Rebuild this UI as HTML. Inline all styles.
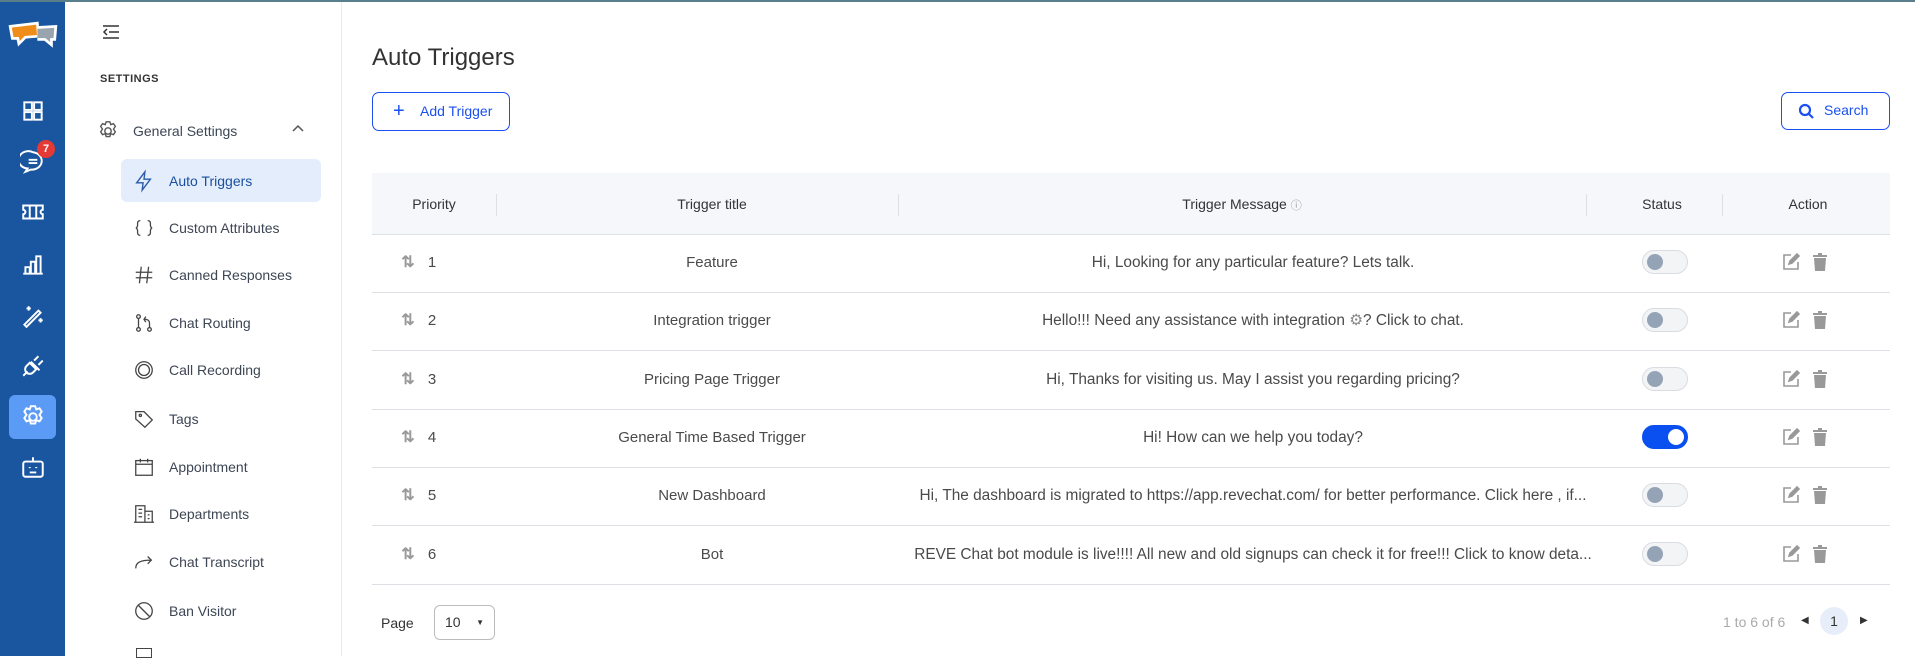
<!DOCTYPE html>
<html><head><meta charset="utf-8"><style>
*{box-sizing:border-box;margin:0;padding:0}
body{width:1915px;height:654px;overflow:hidden;background:#fff;font-family:"Liberation Sans",sans-serif;position:relative;border-top:2px solid #5a7f8c}
.abs{position:absolute}
#rail{left:0;top:0;width:65px;height:654px;background:#1a56a0}
#side{left:65px;top:0;width:277px;height:654px;background:#fff;border-right:1px solid #e8eaee}
.ri{position:absolute;left:20px;width:26px;height:26px}
.it{position:absolute;left:121px;width:200px;height:43px;display:flex;align-items:center;font-size:14px;color:#3d4654}
.it svg{position:absolute;left:12px;width:22px;height:22px;overflow:visible}
.it span{position:absolute;left:48px}
.hd{position:absolute;top:171px;left:372px;width:1518px;height:62px;background:#f5f7fb;border-bottom:1px solid #dde0e5}
.hc{position:absolute;top:0;height:62px;line-height:62px;font-size:14px;color:#333;transform:translateX(-50%);white-space:nowrap}
.sep{position:absolute;top:21px;width:1px;height:22px;background:#dcdfe4}
.row{position:absolute;left:372px;width:1518px;height:58px;border-bottom:1px solid #dcdfe4}
.c{position:absolute;top:0;line-height:56px;font-size:15px;color:#4a4a4a;transform:translateX(-50%);white-space:nowrap}
.m{font-size:15.4px}
.tg{position:absolute;left:1642px;top:15px;width:46px;height:24px;border-radius:12px;background:#f3f4f6;border:1px solid #d9dce1}
.tg i{position:absolute;left:4px;top:3px;width:16px;height:16px;border-radius:50%;background:#95a3b6}
.tg.on{background:#0a4ff0;border-color:#0a4ff0}
.tg.on i{left:25px;background:#fff}
.ac{position:absolute;left:1782px;top:18px}
</style></head><body>
<div id="rail" class="abs">
 <svg class="abs" style="left:8px;top:18px" width="50" height="28" viewBox="0 0 46 24"><path d="M2 5 L27 2 L28 14 L16 15 L10 21 L9 16 L4 16Z" fill="#f08c1a" stroke="#fff" stroke-width="2.5"/><path d="M27 6 L44 5 L43 17 L40 17 L40 22 L34 17 L27 17" fill="#9aa4ae" stroke="#fff" stroke-width="2.5"/></svg>
 <svg class="ri" style="top:96px" viewBox="0 0 24 24" fill="none" stroke="#fff" stroke-width="1.8"><rect x="4" y="4" width="7" height="7"/><rect x="13" y="4" width="7" height="7"/><rect x="4" y="13" width="7" height="7"/><rect x="13" y="13" width="7" height="7"/></svg>
 <svg class="ri" style="top:147px" viewBox="0 0 24 24" fill="none" stroke="#fff" stroke-width="1.8"><path d="M12 3a9 8 0 1 0-5 15l-2 3 5-2a9 8 0 0 0 2-16z"/><path d="M8 10h8M8 13h8"/></svg>
 <div class="abs" style="left:37px;top:138px;width:18px;height:18px;border-radius:50%;background:#e53935;color:#fff;font-size:11px;font-weight:bold;text-align:center;line-height:18px">7</div>
 <svg class="ri" style="top:197px" viewBox="0 0 24 24" fill="none" stroke="#fff" stroke-width="1.8"><path d="M3 6h18v4a2 2 0 0 0 0 4v4H3v-4a2 2 0 0 0 0-4z"/><path d="M9 6v12M15 6v12"/></svg>
 <svg class="ri" style="top:250px" viewBox="0 0 24 24" fill="none" stroke="#fff" stroke-width="1.8"><path d="M3 20h18M5 20v-6h4v6M10 20V9h4v11M15 20V4h4v16"/></svg>
 <svg class="ri" style="top:301px" viewBox="0 0 24 24" fill="none" stroke="#fff" stroke-width="1.8"><path d="M4 20L17 7l2 2L6 22z"/><path d="M8 3v4M6 5h4M19 14v4M17 16h4"/></svg>
 <svg class="ri" style="top:351px" viewBox="0 0 24 24" fill="none" stroke="#fff" stroke-width="1.8"><path d="M3 21l4-4M9 9l6 6-3 3a4 4 0 0 1-6-6z M13 7l4-4M17 11l4-4M10 8l8 8"/></svg>
 <div class="abs" style="left:9px;top:393px;width:47px;height:44px;border-radius:6px;background:#5b9bf5"></div>
 <svg class="ri" style="top:402px" viewBox="0 0 24 24" fill="none" stroke="#fff" stroke-width="1.8"><circle cx="12" cy="12" r="3.5"/><path d="M10 2h4l1 3 3-1 2 3-2 3 2 3-2 3-3-1-1 3h-4l-1-3-3 1-2-3 2-3-2-3 2-3 3 1z"/></svg>
 <svg class="ri" style="top:452px" viewBox="0 0 24 24" fill="none" stroke="#fff" stroke-width="1.8"><rect x="3" y="7" width="18" height="14" rx="2"/><path d="M12 3v4M9 12v1M15 12v1M9 17h6"/></svg>
</div>
<div id="side" class="abs">
 <svg class="abs" style="left:36px;top:22px" width="20" height="16" viewBox="0 0 20 16" fill="none" stroke="#333" stroke-width="1.5"><path d="M2 2h16M8 8h10M2 14h16M6 5L3 8l3 3"/></svg>
 <div class="abs" style="left:35px;top:71px;font-size:11px;font-weight:bold;color:#333;letter-spacing:.5px">SETTINGS</div>
 <svg class="abs" style="left:32px;top:118px" width="22" height="22" viewBox="0 0 24 24" fill="none" stroke="#555" stroke-width="1.5"><circle cx="12" cy="12" r="3.5"/><path d="M10 2h4l1 3 3-1 2 3-2 3 2 3-2 3-3-1-1 3h-4l-1-3-3 1-2-3 2-3-2-3 2-3 3 1z"/></svg>
 <div class="abs" style="left:68px;top:121px;font-size:14px;color:#3d4654">General Settings</div>
 <svg class="abs" style="left:226px;top:122px" width="14" height="10" viewBox="0 0 14 10" fill="none" stroke="#555" stroke-width="1.5"><path d="M2 7l5-5 5 5"/></svg>
</div>
<div class="it" style="top:157px;background:#e3edfc;border-radius:6px;color:#1a4fa0"><svg viewBox="0 0 24 24" fill="none" stroke="#2a5aa8" stroke-width="1.5"><path d="M13 2L4 14h7l-1 8 9-12h-7z"/></svg><span>Auto Triggers</span></div>
<div class="it" style="top:204px"><svg viewBox="0 0 24 24" fill="none" stroke="#444" stroke-width="1.4"><path d="M8 4c-2 0-3 1-3 3v2c0 1.5-1 3-2 3 1 0 2 1.5 2 3v2c0 2 1 3 3 3M16 4c2 0 3 1 3 3v2c0 1.5 1 3 2 3-1 0-2 1.5-2 3v2c0 2-1 3-3 3"/></svg><span>Custom Attributes</span></div>
<div class="it" style="top:251px"><svg viewBox="0 0 24 24" fill="none" stroke="#444" stroke-width="1.4"><path d="M9 3L7 21M17 3l-2 18M3 9h18M3 15h18"/></svg><span>Canned Responses</span></div>
<div class="it" style="top:299px"><svg viewBox="0 0 24 24" fill="none" stroke="#444" stroke-width="1.4"><circle cx="6" cy="5" r="2"/><circle cx="6" cy="19" r="2"/><circle cx="18" cy="19" r="2"/><path d="M6 7v10M18 17v-5a4 4 0 0 0-4-4h-2M14 5l-2 3 2 3"/></svg><span>Chat Routing</span></div>
<div class="it" style="top:346px"><svg viewBox="0 0 24 24" fill="none" stroke="#444" stroke-width="1.4"><circle cx="12" cy="12" r="9"/><circle cx="12" cy="12" r="6"/></svg><span>Call Recording</span></div>
<div class="it" style="top:395px"><svg viewBox="0 0 24 24" fill="none" stroke="#444" stroke-width="1.4"><path d="M3 4h9l9 9-8 8-10-9z"/><circle cx="8" cy="8" r="1.2"/></svg><span>Tags</span></div>
<div class="it" style="top:443px"><svg viewBox="0 0 24 24" fill="none" stroke="#444" stroke-width="1.4"><rect x="3" y="5" width="18" height="16"/><path d="M3 9h18M8 3v4M16 3v4"/></svg><span>Appointment</span></div>
<div class="it" style="top:490px"><svg viewBox="0 0 24 24" fill="none" stroke="#444" stroke-width="1.4"><path d="M3 21V3h10v18M13 9h8v12M1 21h22M6 7h4M6 11h4M6 15h4M16 13h2M16 17h2"/></svg><span>Departments</span></div>
<div class="it" style="top:538px"><svg viewBox="0 0 24 24" fill="none" stroke="#444" stroke-width="1.4"><path d="M3 19c0-6 4-9 17-9M16 6l4 4-4 4"/></svg><span>Chat Transcript</span></div>
<div class="it" style="top:587px"><svg viewBox="0 0 24 24" fill="none" stroke="#444" stroke-width="1.4"><circle cx="12" cy="12" r="9"/><path d="M6 6l12 12"/></svg><span>Ban Visitor</span></div>
<div class="abs" style="left:136px;top:646px;width:16px;height:10px;border:1.4px solid #444"></div>

<div class="abs" style="left:372px;top:42px;font-size:24px;color:#333">Auto Triggers</div>
<div class="abs" style="left:372px;top:90px;width:138px;height:39px;border:1.5px solid #1a4ff0;border-radius:7px;color:#1a4ff0;font-size:14px;line-height:36px;padding-left:47px">Add Trigger</div>
<div class="abs" style="left:393px;top:100px;font-size:20px;color:#1a4ff0;line-height:18px;font-weight:300">+</div>
<div class="abs" style="left:1781px;top:90px;width:109px;height:38px;border:1.5px solid #1a4ff0;border-radius:7px;color:#1a4ff0;font-size:14px;line-height:35px;padding-left:42px">Search</div>
<svg class="abs" style="left:1798px;top:101px" width="16" height="16" viewBox="0 0 16 16" fill="none" stroke="#1a4ff0" stroke-width="2.2"><circle cx="7" cy="7" r="5"/><path d="M11 11l4 4"/></svg>

<div class="hd">
 <div class="hc" style="left:62px">Priority</div><div class="sep" style="left:124px"></div>
 <div class="hc" style="left:870px">Trigger Message <span style="color:#999;font-size:11px">ⓘ</span></div><div class="sep" style="left:1214px"></div>
 <div class="hc" style="left:340px">Trigger title</div><div class="sep" style="left:526px"></div>
 <div class="hc" style="left:1290px">Status</div><div class="sep" style="left:1350px"></div>
 <div class="hc" style="left:1436px">Action</div>
</div>
<div id="rows"></div>
<script>
var d=[["Feature","Hi, Looking for any particular feature? Lets talk.",0],["Integration trigger","Hello!!! Need any assistance with integration <span style='color:#888'>⚙</span>? Click to chat.",0],["Pricing Page Trigger","Hi, Thanks for visiting us. May I assist you regarding pricing?",0],["General Time Based Trigger","Hi! How can we help you today?",1],["New Dashboard","Hi, The dashboard is migrated to https://app.revechat.com/ for better performance. Click here , if...",0],["Bot","REVE Chat bot module is live!!!! All new and old signups can check it for free!!! Click to know deta...",0]];
var h="";d.forEach(function(r,i){var t=233+i*58.3;
h+='<div class="row" style="top:'+t+'px"><div class="c" style="left:36px;color:#999;font-size:16px;font-weight:bold">⇅</div><div class="c" style="left:60px">'+(i+1)+'</div><div class="c" style="left:340px">'+r[0]+'</div><div class="c m" style="left:881px">'+r[1]+'</div><div class="tg'+(r[2]?' on':'')+'" style="left:1270px"><i></i></div>'+
'<svg class="ac" style="left:1410px" width="18" height="18" viewBox="0 0 18 18" fill="none" stroke="#999" stroke-width="1.6"><path d="M9 2H2v14h14V9"/><path d="M7 11l1-3 7-7 2 2-7 7z" fill="#999"/></svg><svg class="ac" style="left:1440px" width="16" height="18" viewBox="0 0 16 18"><rect x="1" y="2" width="14" height="2" fill="#999"/><rect x="6" y="0" width="4" height="2" fill="#999"/><path d="M2 5h12l-1 13H3z" fill="#999"/></svg></div>';});
document.getElementById("rows").innerHTML=h;
</script>
<div class="abs" style="left:381px;top:613px;font-size:14px;color:#333">Page</div>
<div class="abs" style="left:434px;top:603px;width:61px;height:35px;border:1px solid #bbb;border-radius:6px;font-size:14px;color:#333;line-height:33px;padding-left:10px">10<span style="position:absolute;right:10px;font-size:8px">▼</span></div>
<div class="abs" style="left:1723px;top:612px;font-size:14px;color:#aaa">1 to 6 of 6</div>
<div class="abs" style="left:1801px;top:613px;font-size:10px;color:#333">◀</div>
<div class="abs" style="left:1820px;top:605px;width:28px;height:28px;border-radius:50%;background:#e8edfa;text-align:center;line-height:28px;font-size:14px;color:#333">1</div>
<div class="abs" style="left:1860px;top:613px;font-size:10px;color:#333">▶</div>
</body></html>
